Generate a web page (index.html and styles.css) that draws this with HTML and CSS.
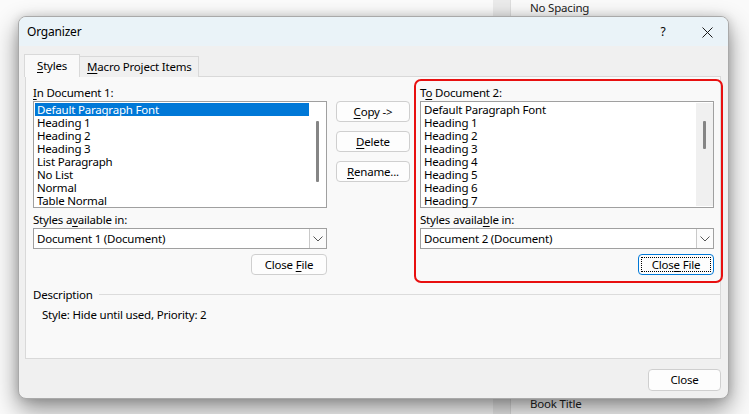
FILE: index.html
```html
<!DOCTYPE html>
<html>

<head>
  <meta name="viewport" content="width=device-width, initial-scale=1">
  <link rel="stylesheet" href="styles.css">
</head>

<body>
  <!-- Word styles pane behind the dialog -->
  <div class="stylepane">
    <div class="stylepane-scroll"></div>
    <div class="stylepane-list">
      <div class="stylepane-item">No Spacing</div>
      <div class="stylepane-item">Book Title</div>
    </div>
  </div>

  <div class="dialog">
    <div class="titlebar">
      <span class="title">Organizer</span>
      <span class="help">?</span>
      <span class="close-x">
        <svg width="11" height="11" viewBox="0 0 11 11">
          <path d="M0.5 0.5 L10.5 10.5 M10.5 0.5 L0.5 10.5" stroke="#1a1a1a" stroke-width="1" fill="none" />
        </svg>
      </span>
    </div>

    <div class="dialog-body">
      <div class="tabs">
        <div class="tab active"><u>S</u>tyles</div>
        <div class="tab"><u>M</u>acro Project Items</div>
      </div>

      <div class="tabpane">
        <div class="columns">
          <div class="doc-col">
            <div class="lbl"><u>I</u>n Document 1:</div>
            <div class="listbox">
              <div class="items">
                <div class="item selected">Default Paragraph Font</div>
                <div class="item">Heading 1</div>
                <div class="item">Heading 2</div>
                <div class="item">Heading 3</div>
                <div class="item">List Paragraph</div>
                <div class="item">No List</div>
                <div class="item">Normal</div>
                <div class="item">Table Normal</div>
              </div>
              <div class="vscroll">
                <div class="thumb thumb-left"></div>
              </div>
            </div>
            <div class="lbl">Styles a<u>v</u>ailable in:</div>
            <div class="combo">
              <span class="combo-text">Document 1 (Document)</span>
              <span class="combo-btn">
                <svg width="10" height="6" viewBox="0 0 10 6">
                  <path d="M0.5 0.5 L5 5 L9.5 0.5" stroke="#555" stroke-width="1" fill="none" />
                </svg>
              </span>
            </div>
            <div class="btn-row">
              <button class="btn btn-file">Close <u>F</u>ile</button>
            </div>
          </div>

          <div class="mid-col">
            <button class="btn btn-mid"><u>C</u>opy -&gt;</button>
            <button class="btn btn-mid"><u>D</u>elete</button>
            <button class="btn btn-mid"><u>R</u>ename...</button>
          </div>

          <div class="doc-col">
            <div class="lbl">T<u>o</u> Document 2:</div>
            <div class="listbox">
              <div class="items">
                <div class="item">Default Paragraph Font</div>
                <div class="item">Heading 1</div>
                <div class="item">Heading 2</div>
                <div class="item">Heading 3</div>
                <div class="item">Heading 4</div>
                <div class="item">Heading 5</div>
                <div class="item">Heading 6</div>
                <div class="item">Heading 7</div>
              </div>
              <div class="vscroll track">
                <div class="thumb thumb-right"></div>
              </div>
            </div>
            <div class="lbl">Styles availa<u>b</u>le in:</div>
            <div class="combo">
              <span class="combo-text">Document 2 (Document)</span>
              <span class="combo-btn">
                <svg width="10" height="6" viewBox="0 0 10 6">
                  <path d="M0.5 0.5 L5 5 L9.5 0.5" stroke="#555" stroke-width="1" fill="none" />
                </svg>
              </span>
            </div>
            <div class="btn-row">
              <button class="btn btn-file focused"><span class="focus-rect">Clos<u>e</u> File</span></button>
            </div>
          </div>
        </div>

        <div class="desc">
          <div class="desc-head">
            <span>Description</span>
            <span class="rule"></span>
          </div>
          <div class="desc-text">Style: Hide until used, Priority: 2</div>
        </div>
      </div>

      <div class="footer">
        <button class="btn btn-close">Close</button>
      </div>
    </div>
  </div>

  <!-- red annotation drawn over the right column -->
  <div class="highlight"></div>
</body>

</html>
```

FILE: styles.css
```css
* {
  box-sizing: border-box;
}

body {
  margin: 0;
  width: 749px;
  height: 414px;
  overflow: hidden;
  position: relative;
  background: #fbfbfb;
  font-family: "Noto Sans", "Open Sans", sans-serif;
  font-size: 11.5px;
  letter-spacing: -0.2px;
  color: #000;
}

u {
  text-decoration-thickness: 1px;
  text-underline-offset: 2px;
}

/* Background pane */
.stylepane {
  display: flex;
  height: 414px;
  padding-left: 493px;
}

.stylepane-scroll {
  width: 18px;
  background: #ebebeb;
  border-right: 1px solid #dedede;
}

.stylepane-list {
  flex: 1;
  display: flex;
  flex-direction: column;
  justify-content: space-between;
  padding-left: 19px;
  padding-top: 1px;
  padding-bottom: 3px;
  background: #fafafa;
}

.stylepane-item {
  line-height: 14px;
  color: #222;
}

/* Dialog window */
.dialog {
  position: absolute;
  left: 18px;
  top: 16px;
  width: 711px;
  height: 383px;
  border: 1px solid #a9a9a9;
  border-radius: 8px;
  overflow: hidden;
  background: #f0f0f0;
  box-shadow: 0 10px 24px rgba(0, 0, 0, 0.45), 0 0 10px rgba(0, 0, 0, 0.14);
  display: flex;
  flex-direction: column;
}

.titlebar {
  height: 29px;
  background: #eaf3f8;
  display: flex;
  align-items: center;
  padding-left: 8px;
}

.title {
  flex: 1;
  font-size: 12px;
  margin-top: -1px;
}

.help {
  width: 46px;
  text-align: center;
  font-size: 12px;
}

.close-x {
  width: 42px;
  display: flex;
  justify-content: center;
  padding-top: 1px;
}

.dialog-body {
  flex: 1;
  display: flex;
  flex-direction: column;
  padding: 8px 7px 0 6px;
}

/* Tabs */
.tabs {
  display: flex;
  align-items: flex-end;
  height: 23px;
  margin-bottom: -1px;
  position: relative;
  z-index: 1;
}

.tab {
  height: 21px;
  line-height: 19px;
  padding: 0 6px 0 7px;
  border: 1px solid #d9d9d9;
  border-bottom: none;
  background: #f0f0f0;
}

.tab.active {
  height: 23px;
  margin-left: -1px;
  padding: 1px 12px 0 12px;
  background: #f9f9f9;
  line-height: 20px;
}

.tab + .tab {
  border-left: none;
}

.tabpane {
  height: 283px;
  border: 1px solid #d9d9d9;
  background: #f9f9f9;
  padding: 8px 6px 0 7px;
}

.columns {
  display: flex;
}

.doc-col {
  width: 294px;
  display: flex;
  flex-direction: column;
}

.lbl {
  height: 15px;
  line-height: 15px;
}

.lbl + .listbox {
  margin-top: 1px;
}

.listbox + .lbl {
  margin-top: 4px;
}

.listbox {
  height: 107px;
  border: 1px solid #a0a0a0;
  background: #fff;
  display: flex;
  padding: 1px 0 1px 1px;
}

.items {
  flex: 1;
}

.item {
  height: 13px;
  line-height: 13px;
  padding-left: 2px;
  white-space: nowrap;
}

.item.selected {
  background: #0078d7;
  color: #fff;
}

.vscroll {
  width: 17px;
  display: flex;
  justify-content: center;
}

.vscroll.track {
  background: #f0f0f0;
}

.thumb {
  width: 3px;
  background: #858585;
  border-radius: 1px;
}

.thumb-left {
  margin-top: 18px;
  height: 61px;
}

.thumb-right {
  margin-top: 18px;
  height: 28px;
}

.combo {
  height: 21px;
  margin-top: 1px;
  border: 1px solid #a0a0a0;
  background: #fff;
  display: flex;
  align-items: stretch;
}

.combo-text {
  flex: 1;
  line-height: 19px;
  padding-left: 3px;
}

.combo-btn {
  width: 17px;
  border-left: 1px solid #c9c9c9;
  background: #fbfbfb;
  display: flex;
  align-items: center;
  justify-content: center;
}

.btn-row {
  display: flex;
  justify-content: flex-end;
  margin-top: 5px;
}

.btn {
  font-family: "Noto Sans", "Open Sans", sans-serif;
  font-size: 11.5px;
  letter-spacing: -0.2px;
  color: #000;
  background: #fdfdfd;
  border: 1px solid #cfcfcf;
  border-radius: 4px;
  height: 21px;
  padding: 0;
  line-height: 18px;
}

.btn-file {
  width: 76px;
}

.btn.focused {
  border-color: #0078d7;
  padding: 2px;
}

.focus-rect {
  display: block;
  height: 15px;
  line-height: 13px;
  border: 1px dotted #000;
}

.mid-col {
  width: 74px;
  margin: 16px 10px 0 9px;
  display: flex;
  flex-direction: column;
  gap: 9px;
}

.btn-mid {
  width: 74px;
}

/* Description */
.desc {
  margin-top: 12px;
  margin-right: -6px;
}

.desc-head {
  display: flex;
  align-items: center;
  height: 15px;
}

.rule {
  flex: 1;
  height: 1px;
  background: #dcdcdc;
  margin-left: 6px;
}

.desc-text {
  margin-top: 5px;
  padding-left: 9px;
  line-height: 15px;
}

.footer {
  display: flex;
  justify-content: flex-end;
  padding-top: 10px;
}

.btn-close {
  width: 73px;
  height: 22px;
}

/* Red annotation */
.highlight {
  position: absolute;
  left: 414px;
  top: 79px;
  width: 309px;
  height: 204px;
  border: 2px solid #e81010;
  border-radius: 7px;
}
```
